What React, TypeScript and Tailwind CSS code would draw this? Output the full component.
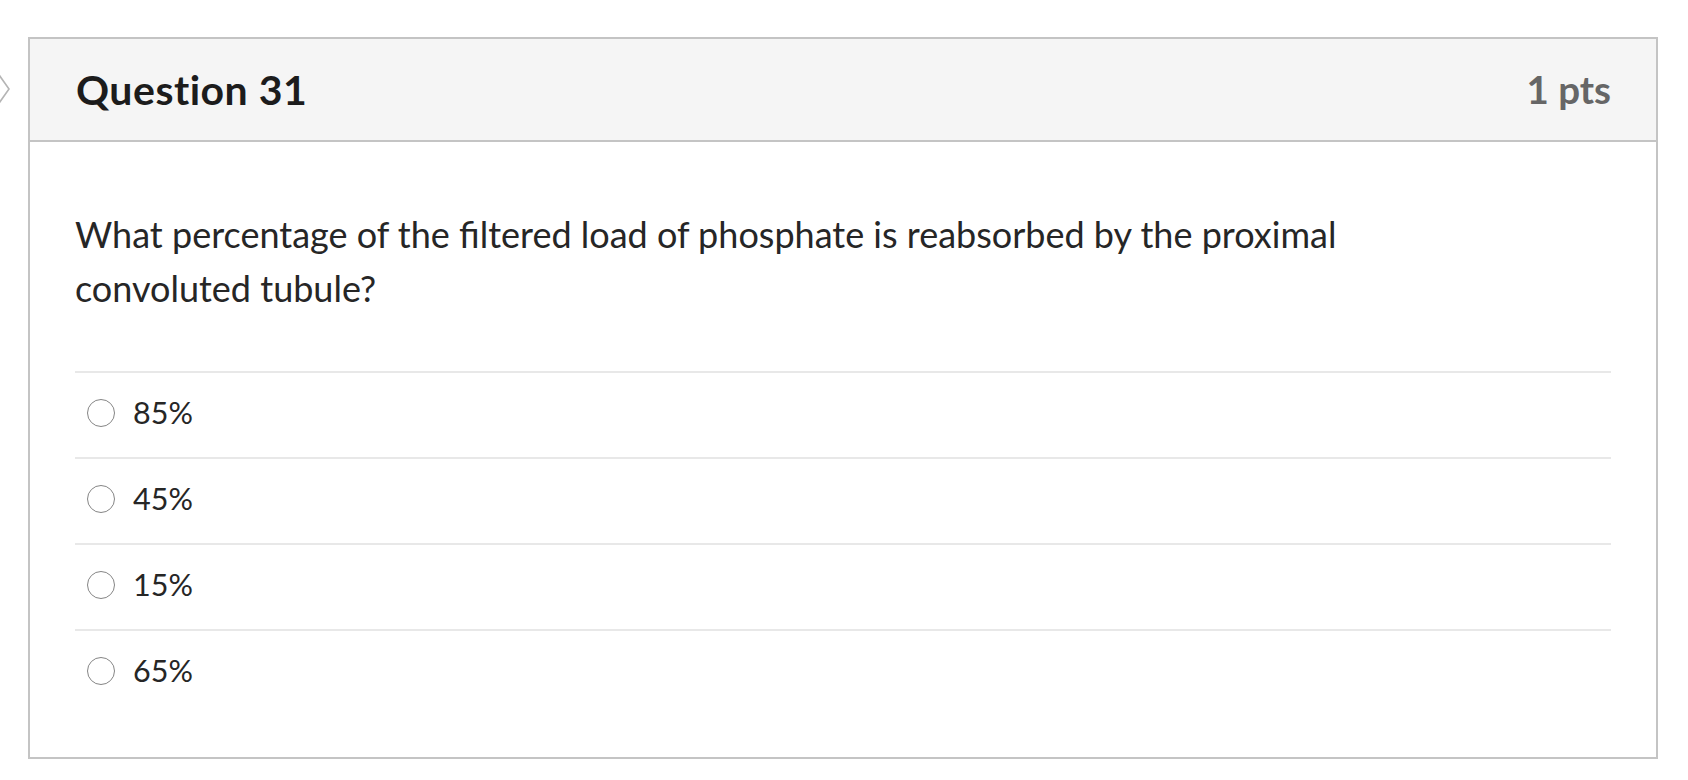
import { Fragment } from 'react';

const answers = ['85%', '45%', '15%', '65%'];

function Radio() {
  return <span className="block w-[28px] h-[28px] shrink-0 rounded-full border-[1.5px] border-[#858585] bg-white" />;
}

export default function App() {
  return (
    <div className="relative w-[1688px] h-[780px] bg-white pt-[37px] pl-[28px] font-['Lato','Noto_Sans',sans-serif] text-[#2b2b2b]">
      {/* cut-off flag tab at the left edge */}
      <svg className="absolute left-0 top-[70px]" width="12" height="38" viewBox="0 0 12 38" fill="none">
        <polyline points="-3,2 9,19 -3,36" stroke="#b5b5b5" strokeWidth="1.6" />
      </svg>

      <div className="w-[1630px] h-[722px] border-2 border-[#c4c4c4] bg-white">
        <div className="h-[103px] flex items-center justify-between px-[45px] pl-[46px] bg-[#f5f5f5] border-b-2 border-[#c4c4c4]">
          <h2 className="text-[41px] font-bold text-[#1c1c1c] tracking-[0.5px]">Question 31</h2>
          <span className="text-[38.5px] font-bold text-[#666666]">1 pts</span>
        </div>

        <div className="px-[45px] pt-[65px]">
          <p className="text-[36px] leading-[54px] max-w-[1300px] text-[#262626]">
            What percentage of the filtered load of phosphate is reabsorbed by the proximal convoluted tubule?
          </p>

          <div className="mt-[56px]">
            {answers.map((a) => (
              <Fragment key={a}>
                <div className="h-[2px] bg-[#e8e8e8]" />
                <label className="h-[84px] flex items-center gap-[18px] pl-[12px] pb-[4px]">
                  <Radio />
                  <span className="text-[30.5px] text-[#262626]">{a}</span>
                </label>
              </Fragment>
            ))}
          </div>
        </div>
      </div>
    </div>
  );
}
